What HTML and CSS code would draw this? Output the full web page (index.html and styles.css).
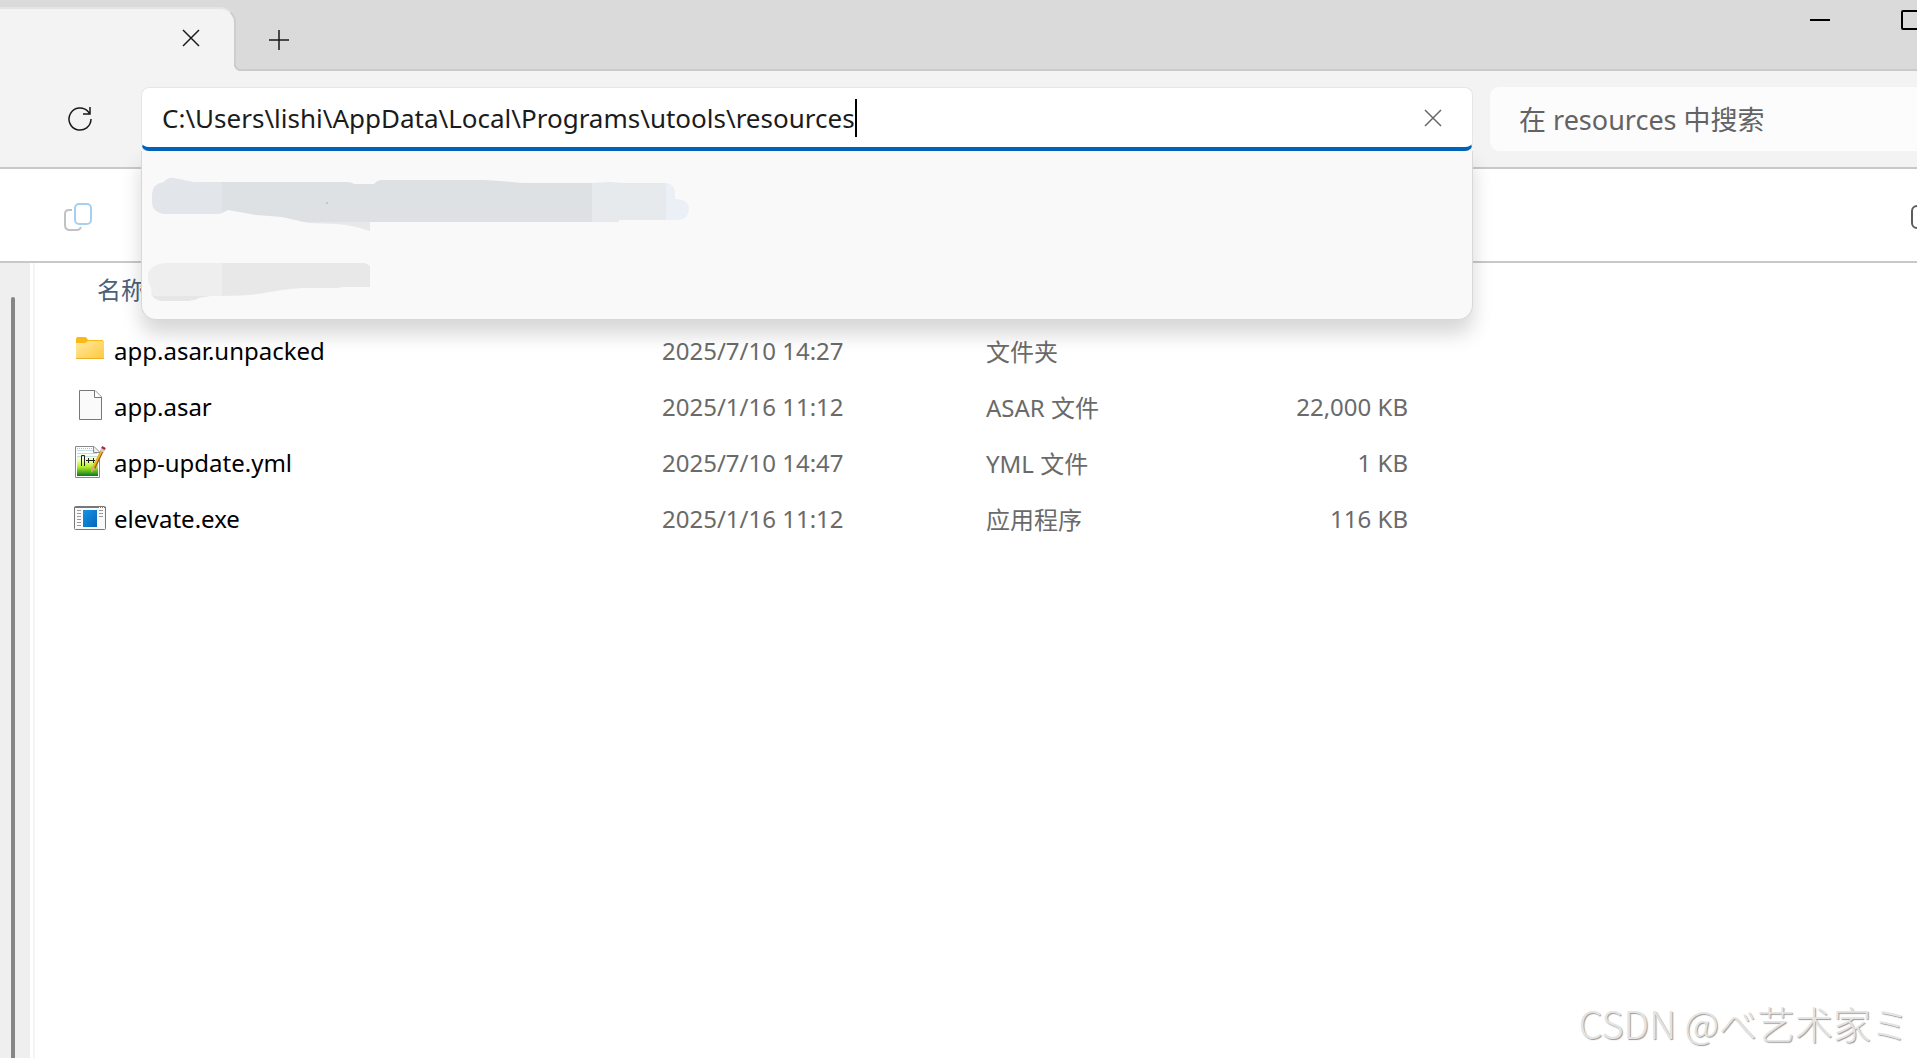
FILE: index.html
```html
<!DOCTYPE html>
<html lang="zh-CN">

<head>
    <meta charset="UTF-8">
    <meta name="viewport" content="width=device-width, initial-scale=1">
    <title>resources</title>
    <link rel="stylesheet" href="styles.css">
</head>

<body>
    <header class="titlebar">
        <div class="tab">
            <button class="icon-button thin" type="button" aria-label="关闭标签页">
                <svg width="18" height="18" viewBox="0 0 18 18"><path d="M1 1L17 17M17 1L1 17" /></svg>
            </button>
        </div>
        <button class="icon-button thin new-tab" type="button" aria-label="新建标签页">
            <svg width="20" height="20" viewBox="0 0 20 20"><path d="M10 0V20M0 10H20" /></svg>
        </button>
        <div class="window-buttons">
            <button class="icon-button" type="button" aria-label="最小化">
                <svg width="20" height="20" viewBox="0 0 20 20"><path d="M0 10H20" /></svg>
            </button>
            <button class="icon-button" type="button" aria-label="最大化">
                <svg width="16" height="20" viewBox="0 0 16 20"><rect x="1" y="1" width="18" height="18" rx="1" /></svg>
            </button>
        </div>
    </header>

    <nav class="toolbar">
        <button class="icon-button thin refresh" type="button" aria-label="刷新">
            <svg width="26" height="26" viewBox="0 0 26 26"><path d="M24 13A11 11 0 1 1 21 5.500L23 8M23 1V8H16" /></svg>
        </button>

        <div class="address">
            <div class="address-box">
                <input class="address-input" type="text" aria-label="地址" spellcheck="false" value="C:\Users\lishi\AppData\Local\Programs\utools\resources">
                <span class="caret"></span>
                <button class="icon-button thin clear" type="button" aria-label="清除">
                    <svg width="18" height="18" viewBox="0 0 18 18"><path d="M1 1L17 17M17 1L1 17" /></svg>
                </button>
            </div>
            <ul class="suggestions">
                <li>
                    <svg width="560" height="84" viewBox="142 151 560 84">
                        <path fill="#e8e8e8" d="M300 221H370V231Q352 225 336 224L308 223Z" />
                        <path fill="#e2e6eb" d="M164 182Q168 177 174 178L194 182H223V213Q220 214 217 214H164Q152 212 152 202V194Q153 183 164 182Z" />
                        <path fill="#dde1e4" d="M222 182H346Q352 182 354 184H374Q377 180 382 180H484Q502 181 522 183H592V222H304L282 217L256 215L228 210L222 213Z" />
                        <path fill="#e6eaed" d="M592 183L610 182L624 183H666V220H619V222H592Z" />
                        <path fill="#ebf0f6" d="M666 183Q675 184 675 193V199Q689 199 689 209Q688 220 678 220H666Z" />
                        <circle cx="327" cy="203" r="1" fill="#b8bcc0" />
                    </svg>
                </li>
                <li>
                    <svg width="560" height="84" viewBox="142 235 560 84">
                        <path fill="#e6e6e6" d="M151 294H222L199 298Q194 301 188 301H162Q154 300 151 294Z" />
                        <path fill="#eeeeee" d="M166 263H222V296H153Q151 292 151 288Q147 281 148 274Q151 264 166 263Z" />
                        <path fill="#e8e8e8" d="M222 263H365L370 266V287H342L338 288H302Q285 289 264 293Q250 296 222 296Z" />
                    </svg>
                </li>
            </ul>
        </div>

        <input class="search" type="search" aria-label="搜索" placeholder="在 resources 中搜索">
    </nav>

    <div class="commands">
        <button class="icon-button" type="button" aria-label="复制">
            <svg width="28" height="28" viewBox="0 0 28 28">
                <path stroke="#c2c2c2" d="M8 7H5Q1 7 1 11V22Q1 27 6 27H13Q16 27 17 24" />
                <rect stroke="#a5d0f0" x="11" y="1" width="16" height="20" rx="4" />
            </svg>
        </button>
        <button class="icon-button" type="button" aria-label="预览">
            <svg stroke="#5c5c5c" width="6" height="24" viewBox="0 0 6 24"><rect x="1" y="1" width="28" height="22" rx="5" /></svg>
        </button>
    </div>

    <main class="content">
        <aside class="sidebar">
            <div class="scrollbar"></div>
        </aside>

        <table class="files">
            <colgroup>
                <col class="col-name">
                <col class="col-date">
                <col class="col-type">
                <col class="col-size">
                <col>
            </colgroup>
            <thead>
                <tr>
                    <th colspan="5">名称</th>
                </tr>
            </thead>
            <tbody>
                <tr>
                    <td>
                        <div class="file">
                            <svg width="32" height="32" viewBox="0 0 32 32">
                                <defs>
                                    <linearGradient id="folder" x1="0" y1="0" x2="1" y2="1">
                                        <stop offset="0" stop-color="#ffe9a0" />
                                        <stop offset="1" stop-color="#ffc93c" />
                                    </linearGradient>
                                </defs>
                                <path fill="#fbb917" d="M2 5Q2 3 4 3H11Q13 3 14 6H29V12H2Z" />
                                <path fill="url(#folder)" d="M2 9H11L14 7H30V24Q30 25 29 25H3Q2 25 2 24Z" />
                                <path fill="#eeae2c" d="M2 24H30Q30 25 29 25H3Q2 25 2 24Z" />
                            </svg>
                            <span>app.asar.unpacked</span>
                        </div>
                    </td>
                    <td>2025/7/10 14:27</td>
                    <td>文件夹</td>
                    <td class="size"></td>
                    <td></td>
                </tr>
                <tr>
                    <td>
                        <div class="file">
                            <svg width="32" height="32" viewBox="0 0 32 32">
                                <path fill="#fafafa" stroke="#777" d="M5.500 .500H21L27.500 7V29.500H5.500Z" />
                                <path fill="#fff" stroke="#777" d="M20.500 .500V7.500H27.500" />
                            </svg>
                            <span>app.asar</span>
                        </div>
                    </td>
                    <td>2025/1/16 11:12</td>
                    <td>ASAR 文件</td>
                    <td class="size">22,000 KB</td>
                    <td></td>
                </tr>
                <tr>
                    <td>
                        <div class="file">
                            <svg width="32" height="32" viewBox="0 0 32 32">
                                <defs>
                                    <linearGradient id="notepad" x1="0" y1="0" x2="0" y2="1">
                                        <stop offset="0" stop-color="#fff" />
                                        <stop offset=".35" stop-color="#e8ffa0" />
                                        <stop offset=".6" stop-color="#b4ee28" />
                                        <stop offset="1" stop-color="#087a18" />
                                    </linearGradient>
                                </defs>
                                <path fill="#fff" stroke="#888" d="M1.500 .500H20L25.500 6V31.500H1.500Z" />
                                <path fill="none" stroke="#bbb" stroke-dasharray="1 1" d="M3 2.500H19" />
                                <path fill="url(#notepad)" d="M3 7H24V30H3Z" />
                                <path fill="none" stroke="#c3dbe6" d="M3 4.500H19M3 7.500H23M3 10.500H23" />
                                <path fill="#eee" stroke="#888" d="M19.500 1V6.500H25" />
                                <path fill="none" stroke="#222" d="M7.500 20V9.500H10.500V20M12 14.500H18M14.500 12V17M18 14.500H21M19.500 12V17" />
                                <path fill="none" stroke="#9c5c12" stroke-width="3" d="M29 3L20 22" />
                                <path fill="none" stroke="#eeb32d" stroke-width="2" d="M28 4L19 22" />
                                <path fill="#dba977" d="M18 20L21 23L17 27Z" />
                                <path fill="none" stroke="#c5ccd5" stroke-width="4" d="M28 6L29 3" />
                                <path fill="none" stroke="#a42b38" stroke-width="4" d="M29 3L30 1" />
                            </svg>
                            <span>app-update.yml</span>
                        </div>
                    </td>
                    <td>2025/7/10 14:47</td>
                    <td>YML 文件</td>
                    <td class="size">1 KB</td>
                    <td></td>
                </tr>
                <tr>
                    <td>
                        <div class="file">
                            <svg width="32" height="32" viewBox="0 0 32 32">
                                <defs>
                                    <linearGradient id="exe" x1="0" y1="0" x2="1" y2="1">
                                        <stop offset="0" stop-color="#1595e8" />
                                        <stop offset="1" stop-color="#0865b9" />
                                    </linearGradient>
                                </defs>
                                <rect fill="#fafafa" stroke="#777" x=".5" y="4.500" width="31" height="23" rx="1" />
                                <path fill="none" stroke="#777" d="M0 5.500H32" />
                                <path fill="none" stroke="#fff" d="M25 5.500H26M27 5.500H28M29 5.500H30" />
                                <path fill="none" stroke="#999" d="M3 8.500H7M3 11.500H7M3 14.500H7M3 17.500H7M3 20.500H7M3 23.500H7M25 8.500H29M25 11.500H29M25 14.500H29" />
                                <path fill="url(#exe)" d="M9 8H23V25H9Z" />
                            </svg>
                            <span>elevate.exe</span>
                        </div>
                    </td>
                    <td>2025/1/16 11:12</td>
                    <td>应用程序</td>
                    <td class="size">116 KB</td>
                    <td></td>
                </tr>
            </tbody>
        </table>
    </main>

    <div class="watermark">CSDN @べ艺术家ミ</div>
</body>

</html>
```
FILE: styles.css
```css
*{
    padding: 0px;
    margin: 0px;
    box-sizing: border-box;
}

body{
    height: 100vh;
    display: flex;
    flex-direction: column;
    overflow: hidden;
    background-color: white;
    font-family: "Noto Sans", "Noto Sans CJK SC", sans-serif;
    font-size: 24px;
}

input{
    font-family: inherit;
    border: none;
    outline: none;
}

svg{
    display: block;
    flex-shrink: 0;
}

.icon-button{
    display: flex;
    align-items: center;
    justify-content: center;
    border: none;
    background: none;
}

.icon-button svg{
    fill: none;
    stroke-width: 2;
}

.thin svg{
    stroke-width: 1.5;
}

/* title bar */
.titlebar{
    height: 71px;
    display: flex;
    align-items: flex-end;
    background-color: #dadada;
    border-bottom: 2px solid #cacaca;
    stroke: #1a1a1a;
}

.tab{
    position: relative;
    width: 236px;
    height: 64px;
    padding: 0px 34px 4px 0px;
    margin-bottom: -2px;
    display: flex;
    align-items: center;
    justify-content: flex-end;
    background-color: #f3f3f3;
    border-top: 2px solid #e4e4e4;
    border-right: 2px solid #cdcdcd;
    border-top-right-radius: 16px;
}

/* rounded foot where the tab meets the bar */
.tab::after{
    content: "";
    position: absolute;
    right: -8px;
    bottom: 0px;
    width: 8px;
    height: 8px;
    background: radial-gradient(circle at top right, #dadada 6px, #cacaca 7px, #cacaca 8px, #f3f3f3 9px);
}

.new-tab{
    width: 86px;
    height: 58px;
}

.window-buttons{
    align-self: flex-start;
    margin-left: auto;
    height: 40px;
    display: flex;
    gap: 71px;
    stroke: black;
}

/* toolbar with the address and search boxes */
.toolbar{
    height: 98px;
    padding: 16px 0px;
    display: grid;
    grid-template-columns: 141px 1fr 444px;
    background-color: #f3f3f3;
    border-bottom: 2px solid #c8c8c8;
}

.refresh{
    margin-left: 18px;
    stroke: #1a1a1a;
}

.address{
    position: relative;
    z-index: 2;
}

.address-box{
    height: 64px;
    padding-left: 20px;
    display: flex;
    align-items: center;
    background-color: white;
    border: 1px solid #e6e6e6;
    border-bottom: 4px solid #0063ba;
    border-radius: 8px;
}

.address-input{
    field-sizing: content;
    height: 56px;
    font-size: 26px;
    color: #1b1b1b;
}

.caret{
    width: 2px;
    height: 38px;
    background-color: black;
}

.clear{
    width: 78px;
    height: 56px;
    margin-left: auto;
    stroke: #666;
}

.suggestions{
    position: absolute;
    top: 64px;
    left: 0px;
    right: 0px;
    list-style: none;
    background-color: #f9f9f9;
    border: 1px solid #d8d8d8;
    border-top: none;
    border-radius: 0px 0px 15px 15px;
    box-shadow: 0px 14px 20px rgba(0, 0, 0, 0.16);
}

.search{
    margin-left: 17px;
    padding-left: 29px;
    height: 64px;
    font-size: 27px;
    background-color: #fcfcfc;
    border-radius: 9px 0px 0px 9px;
}

.search::placeholder{
    color: #636363;
}

/* command bar */
.commands{
    height: 94px;
    padding: 4px 0px 0px 64px;
    display: flex;
    align-items: center;
    justify-content: space-between;
    border-bottom: 2px solid #c8c8c8;
}

/* file list */
.content{
    flex: 1;
    display: flex;
    align-items: flex-start;
}

.sidebar{
    width: 35px;
    align-self: stretch;
    flex-shrink: 0;
    display: flex;
    padding: 34px 0px 0px 11px;
    background: linear-gradient(to right, #efefef 30px, white 30px, white 33px, #f5f5f5 33px);
}

.scrollbar{
    width: 4px;
    background-color: #868686;
    border-radius: 2px 2px 0px 0px;
}

.files{
    flex: 1;
    table-layout: fixed;
    border-collapse: collapse;
    color: #6a6a6a;
}

.col-name{
    width: 627px;
}

.col-date{
    width: 324px;
}

.col-type{
    width: 222px;
}

.col-size{
    width: 200px;
}

.files th{
    height: 59px;
    padding: 0px 0px 8px 62px;
    text-align: left;
    font-weight: normal;
    color: #4c607a;
}

.files td{
    height: 56px;
}

.files .size{
    text-align: right;
}

.file{
    display: flex;
    align-items: center;
    gap: 8px;
    padding-left: 39px;
    color: black;
}

.watermark{
    position: absolute;
    right: 8px;
    bottom: 8px;
    font-family: "Noto Sans CJK SC", sans-serif;
    font-size: 38px;
    font-weight: 300;
    color: #e4e4e4;
    text-shadow: 1px 1px 1px #999;
}
```
